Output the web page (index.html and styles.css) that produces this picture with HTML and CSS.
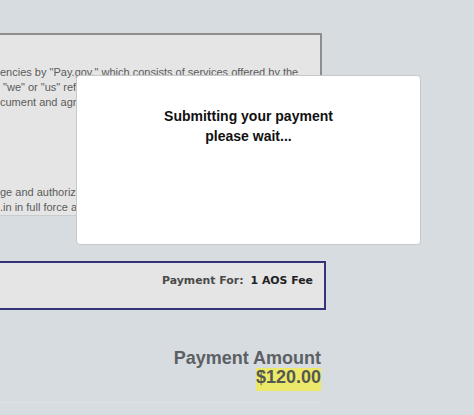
FILE: index.html
```html
<!DOCTYPE html>
<html lang="en">
<head>
<meta charset="utf-8">
<title>Submitting payment</title>
<link rel="stylesheet" href="styles.css">
</head>
<body>
<div class="page">
  <section class="terms">
    <p class="terms-line">encies by "Pay.gov," which consists of services offered by the</p>
    <p class="terms-line">&nbsp;"we" or "us" refers to the Bureau of the Fiscal Service and</p>
    <p class="terms-line">cument and agree to be bound by its terms and conditions.</p>
    <p class="terms-line terms-gap">ge and authorize the charge to my account and agree that</p>
    <p class="terms-line">.in in full force and effect until the payment is processed.</p>
  </section>

  <section class="payfor">
    <span class="payfor-label">Payment For:</span>
    <span class="payfor-value">1 AOS Fee</span>
  </section>

  <section class="amount">
    <div class="amount-title">Payment Amount</div>
    <div class="amount-row"><span class="amount-value">$120.00</span></div>
  </section>
</div>

<div class="modal">
  <p class="modal-text">Submitting your payment<br>please wait...</p>
</div>
</body>
</html>
```

FILE: styles.css
```css
html, body {
  margin: 0;
  padding: 0;
}

body {
  background: #d7dce0;
  width: 474px;
  height: 415px;
  overflow: hidden;
  position: relative;
  font-family: "Liberation Sans", Arial, sans-serif;
}

.page {
  padding-top: 33px;
}

.terms {
  width: 320px;
  height: 150px;
  background: #e5e5e5;
  border-top: 2px solid #8d8d8d;
  border-right: 2px solid #8d8d8d;
  border-bottom: 1px solid #c9cbcd;
  padding-top: 30px;
  overflow: hidden;
}

.terms-line {
  margin: 0;
  font-size: 11px;
  line-height: 15px;
  color: #5b5b5b;
  white-space: nowrap;
}

.terms-gap {
  margin-top: 75px;
}

.payfor {
  margin-top: 45px;
  margin-left: -2px;
  width: 313px;
  height: 34px;
  padding: 11px 11px 0 0;
  background: #e5e5e5;
  border: 2px solid #33337a;
  display: flex;
  justify-content: flex-end;
  gap: 7px;
  font-family: "DejaVu Sans", Verdana, sans-serif;
  font-weight: bold;
  font-size: 10.9px;
  line-height: 14px;
}

.payfor-label {
  color: #4a4a4a;
}

.payfor-value {
  color: #222;
}

.amount {
  width: 321px;
  margin-top: 39px;
  padding-bottom: 11px;
  border-bottom: 1px solid #e0e3e6;
  text-align: right;
  font-size: 18px;
  font-weight: bold;
  line-height: 19px;
  color: #5c6064;
}

.amount-value {
  display: inline-block;
  background: #ece96a;
  color: #55584f;
  padding-bottom: 4px;
  line-height: 19px;
}

.modal {
  position: absolute;
  left: 76px;
  top: 75px;
  width: 343px;
  height: 168px;
  background: #fff;
  border: 1px solid #c6c8ca;
  border-radius: 4px;
}

.modal-text {
  margin: 0;
  padding-top: 30px;
  text-align: center;
  font-size: 14px;
  font-weight: bold;
  line-height: 20px;
  color: #111;
}
```
